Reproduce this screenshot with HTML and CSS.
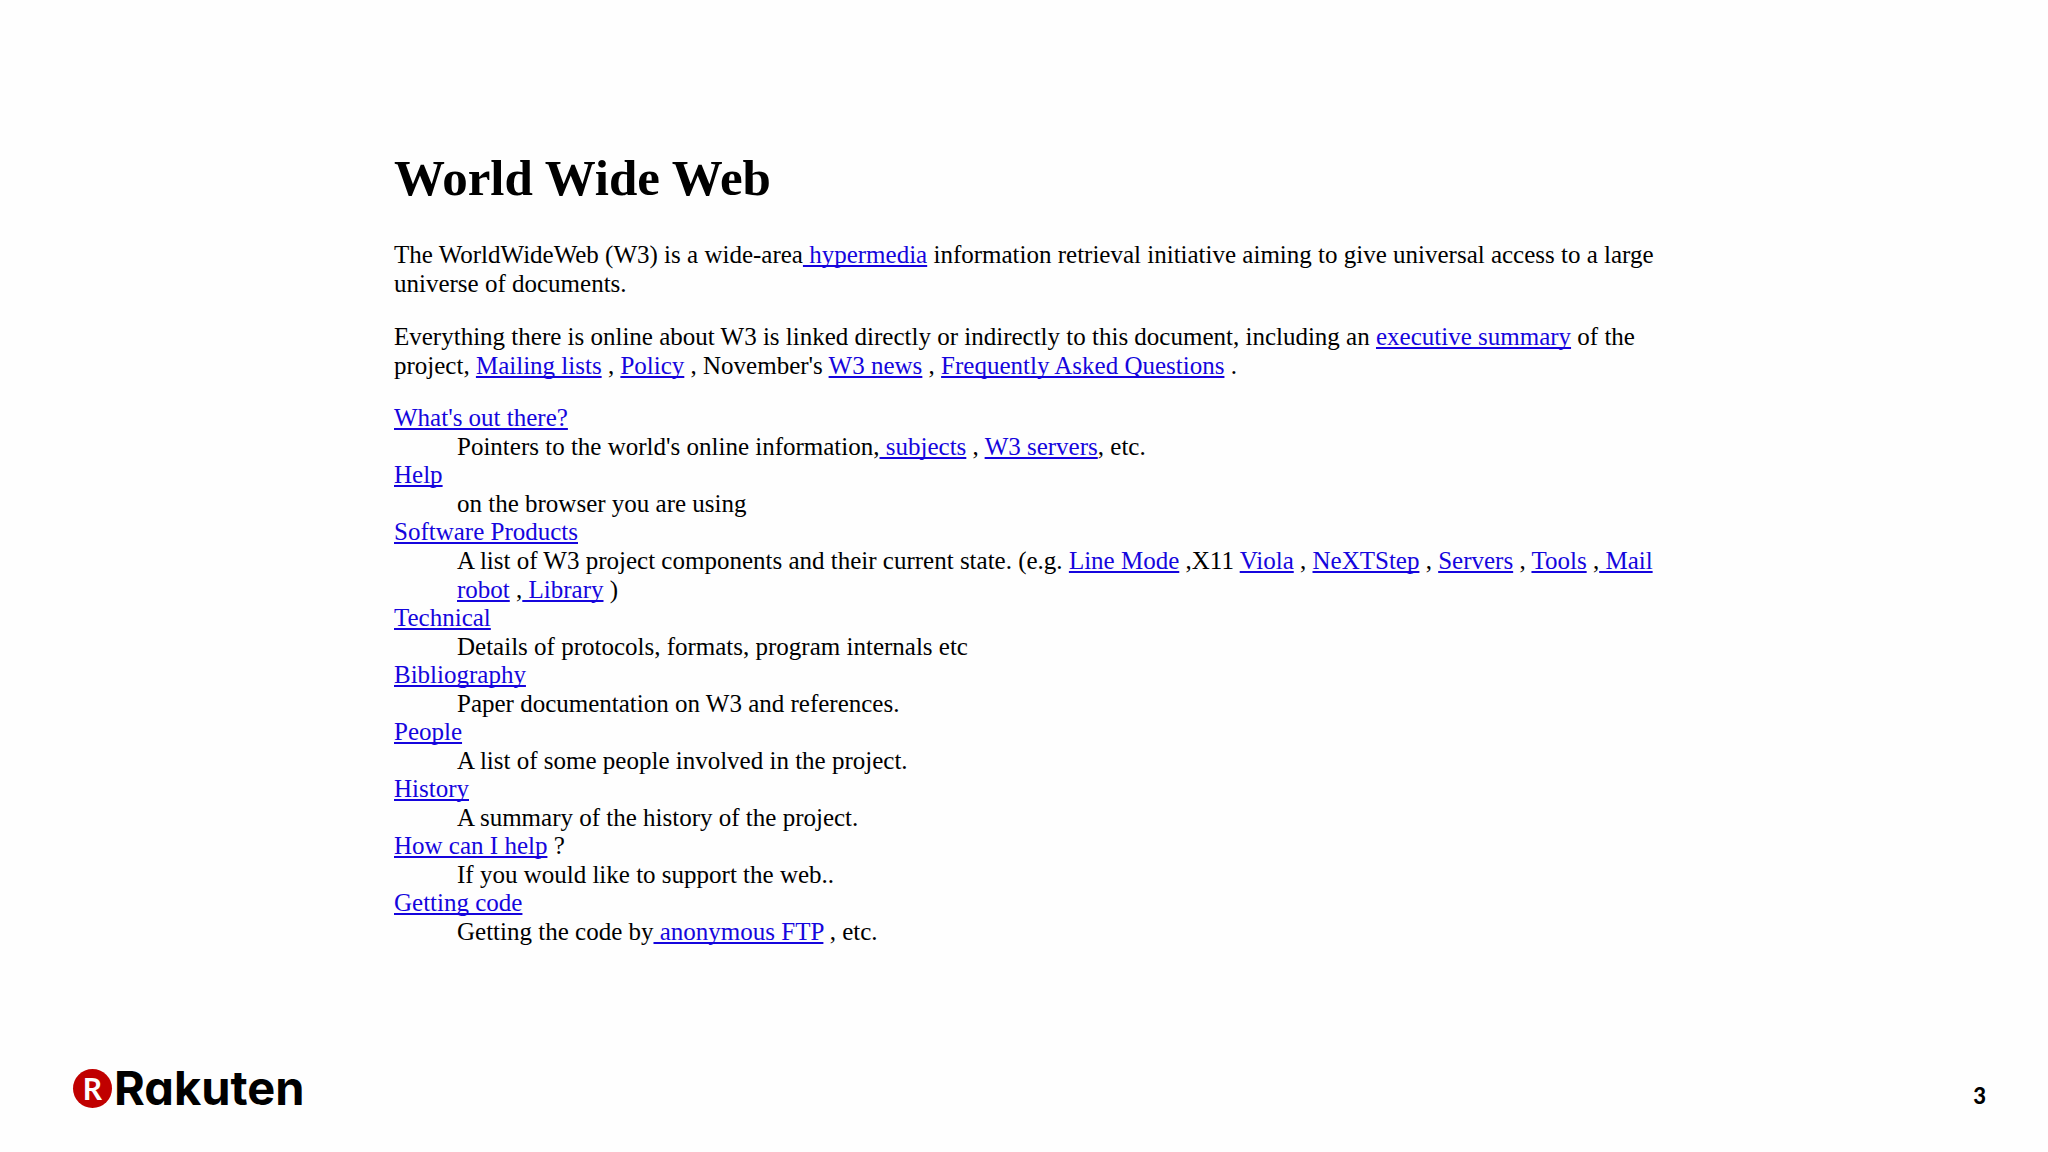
FILE: index.html
```html
<!DOCTYPE html>
<html lang="en">
<head>
<meta charset="utf-8">
<title>World Wide Web</title>
<link rel="stylesheet" href="styles.css">
</head>
<body class="slide">
<main class="document">
<h1 class="title">World Wide Web</h1>
<p class="para">The WorldWideWeb (W3) is a wide-area<a href="#hypermedia"> hypermedia</a> information retrieval initiative aiming to give universal access to a large universe of documents.</p>
<p class="para">Everything there is online about W3 is linked directly or indirectly to this document, including an <a href="#summary">executive summary</a> of the project, <a href="#lists">Mailing lists</a> , <a href="#policy">Policy</a> , November's <a href="#news">W3 news</a> , <a href="#faq">Frequently Asked Questions</a> .</p>
<dl class="topics">
<dt><a href="#out-there">What's out there?</a></dt>
<dd>Pointers to the world's online information,<a href="#subjects"> subjects</a> , <a href="#w3-servers">W3 servers</a>, etc.</dd>
<dt><a href="#help">Help</a></dt>
<dd>on the browser you are using</dd>
<dt><a href="#software">Software Products</a></dt>
<dd>A list of W3 project components and their current state. (e.g. <a href="#line-mode">Line Mode</a> ,X11 <a href="#viola">Viola</a> , <a href="#nextstep">NeXTStep</a> , <a href="#servers">Servers</a> , <a href="#tools">Tools</a> ,<a href="#mail-robot"> Mail robot</a> ,<a href="#library"> Library</a> )</dd>
<dt><a href="#technical">Technical</a></dt>
<dd>Details of protocols, formats, program internals etc</dd>
<dt><a href="#bibliography">Bibliography</a></dt>
<dd>Paper documentation on W3 and references.</dd>
<dt><a href="#people">People</a></dt>
<dd>A list of some people involved in the project.</dd>
<dt><a href="#history">History</a></dt>
<dd>A summary of the history of the project.</dd>
<dt><a href="#how">How can I help</a> ?</dt>
<dd>If you would like to support the web..</dd>
<dt><a href="#code">Getting code</a></dt>
<dd>Getting the code by<a href="#ftp"> anonymous FTP</a> , etc.</dd>
</dl>
</main>
<footer class="footer">
<div class="brand"><span class="brand-mark">R</span><span class="brand-name">Rakuten</span></div>
<span class="page-number">3</span>
</footer>
</body>
</html>
```

FILE: styles.css
```css
* { box-sizing: border-box; }

.slide {
  margin: 0;
  min-height: 100vh;
  display: flex;
  flex-direction: column;
  justify-content: space-between;
  background: #fefefe;
  color: #000;
}

.document {
  max-width: 1682px;
  padding: 148px 0 0 394px;
  font-family: "Liberation Serif", "Times New Roman", serif;
  font-size: 25px;
  line-height: 29px;
}

.title {
  margin: 0 0 32px;
  font-size: 51px;
  line-height: 60px;
}

.para { margin: 0 0 24px; }

.topics { margin: 0; }
.topics dt { line-height: 28px; }
.topics dd { margin: 0 0 0 63px; }

.document a {
  color: #1505dd;
  text-decoration-skip-ink: none;
}

.footer {
  display: flex;
  justify-content: space-between;
  align-items: flex-end;
  padding: 0 62px 36px 73px;
}

.brand {
  display: flex;
  align-items: center;
  gap: 2px;
}

.brand-mark {
  display: grid;
  place-items: center;
  width: 39px;
  height: 39px;
  border-radius: 50%;
  background: #c00000;
  color: #fefefe;
  font-family: Lato, sans-serif;
  font-size: 30px;
  font-weight: 700;
  line-height: 39px;
}

.brand-name {
  font-family: Inter, sans-serif;
  font-size: 47px;
  font-weight: 700;
  line-height: 56px;
  font-feature-settings: "cv11";
}

.page-number {
  font-family: Lato, sans-serif;
  font-size: 22px;
  font-weight: 900;
  line-height: 40px;
}
```
